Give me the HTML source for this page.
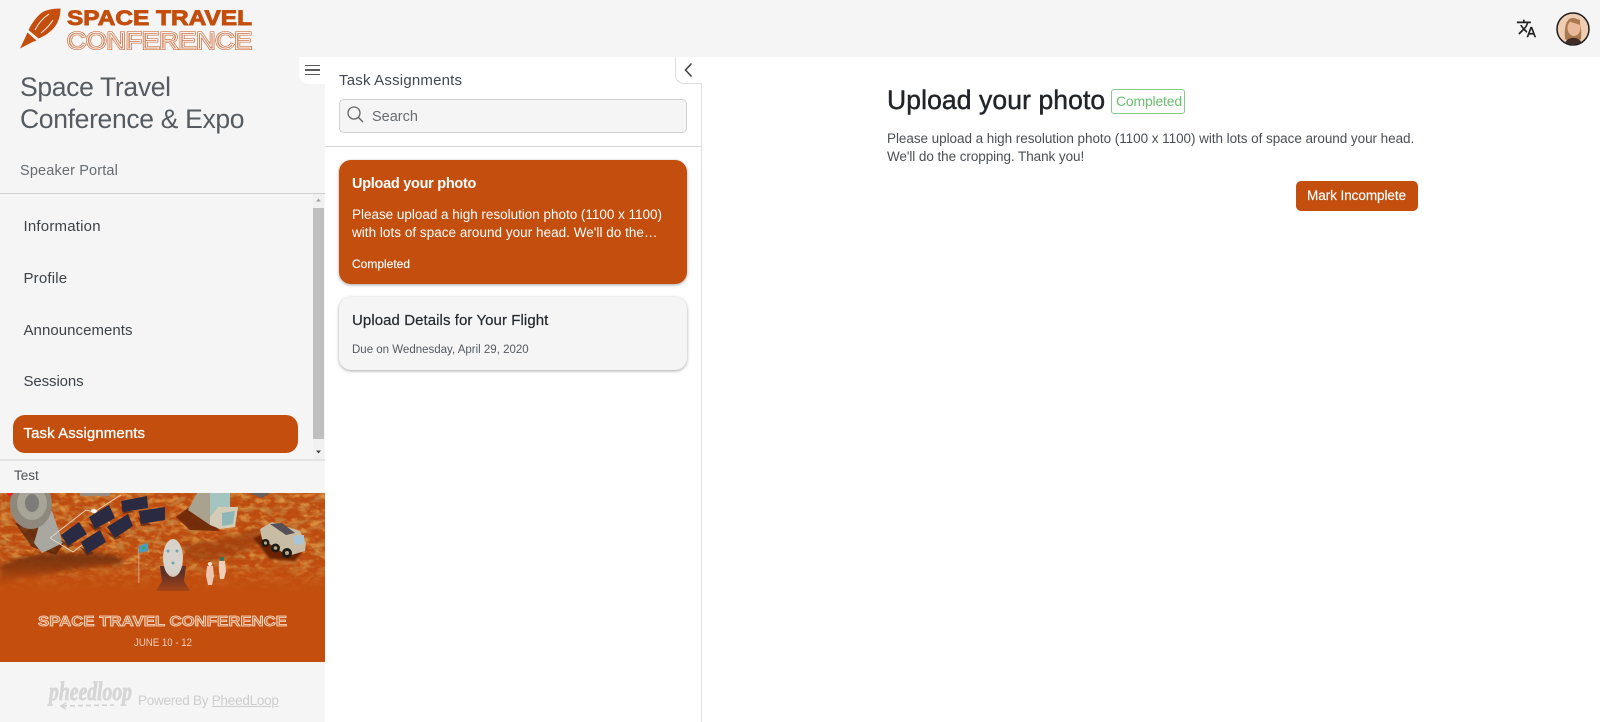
<!DOCTYPE html>
<html lang="en">
<head>
<meta charset="utf-8">
<title>Task Assignments</title>
<style>
html,body{margin:0;padding:0;width:1600px;height:722px;overflow:hidden;background:#fff;font-family:"Liberation Sans",Arial,sans-serif}
.t{position:absolute;white-space:nowrap;line-height:20px}
.b{position:absolute}
</style>
</head>
<body>
<!-- header -->
<div class="b" style="left:0;top:0;width:1600px;height:57px;background:#f5f5f5"></div>
<svg class="b" style="left:0;top:0" width="270" height="57" viewBox="0 0 270 57">
  <path d="M60.500 8.500C52 8.500 44 10 39.500 14.500C34.500 19.500 31 24.500 28.500 30L38.500 38.500C44 36.500 51 32 55 26.500C59 21 60.500 14.500 60.500 8.500Z" fill="#c34e0d"/>
  <path d="M35 30C38 24 43 18 49 14M41 33C46 29 50 25 53 20" fill="none" stroke="#f5f5f5" stroke-width="1"/>
  <path d="M27.500 32.500L36.500 40.500L32.500 42L20 48.500L25.500 37Z" fill="#c34e0d"/>
  <text x="67" y="25" font-family="Liberation Sans" font-weight="700" font-size="21.500" fill="#c34e0d" stroke="#c34e0d" stroke-width=".9" textLength="185" lengthAdjust="spacingAndGlyphs">SPACE TRAVEL</text>
  <text x="67" y="49" font-family="Liberation Sans" font-size="24" fill="#c34e0d" stroke="#c34e0d" stroke-width="2.100" textLength="185" lengthAdjust="spacingAndGlyphs">CONFERENCE</text>
  <text x="67" y="49" font-family="Liberation Sans" font-size="24" fill="#d9825a" stroke="#f5f5f5" stroke-width="1" textLength="185" lengthAdjust="spacingAndGlyphs">CONFERENCE</text>
</svg>
<svg class="b" style="left:1516px;top:18px" width="21" height="21" viewBox="0 0 24 24"><path fill="#222" d="M12.87 15.07l-2.54-2.51.03-.03c1.74-1.94 2.98-4.17 3.71-6.53H17V4h-7V2H8v2H1v1.99h11.17C11.5 7.92 10.44 9.75 9 11.35 8.07 10.32 7.3 9.19 6.69 8h-2c.73 1.63 1.73 3.17 2.98 4.56l-5.09 5.02L4 19l5-5 3.11 3.11.76-2.04zM18.5 10h-2L12 22h2l1.12-3h4.75L21 22h2l-4.5-12zm-2.62 7l1.62-4.33L19.12 17h-3.24z"/></svg>
<svg class="b" style="left:1556px;top:12px" width="34" height="34" viewBox="0 0 34 34">
  <circle cx="17" cy="17" r="16" fill="#efcdb2" stroke="#1e1e1e" stroke-width="1.500"/>
  <path d="M9 27C8 15 10 6 17 6S26 15 25 27C24 29 10 29 9 27Z" fill="#a8784e"/>
  <ellipse cx="18" cy="16" rx="6.500" ry="8" fill="#eab998"/>
  <path d="M12 8C15 11 20 11 24 13L24 8L17 6Z" fill="#a8784e"/>
  <path d="M9.500 30C12 24.500 23 24.500 25 30C21 33 13 33 9.500 30Z" fill="#3f2c24"/>
</svg>

<!-- sidebar -->
<div class="b" style="left:0;top:57px;width:325px;height:665px;background:#f5f5f5"></div>
<div class="b" style="left:299px;top:57px;width:26px;height:27px;background:#fff;border-bottom-left-radius:9px"></div>
<div class="b" style="left:305px;top:64.500px;width:15px;height:1.600px;background:#5c5c5c"></div>
<div class="b" style="left:305px;top:69px;width:15px;height:1.600px;background:#5c5c5c"></div>
<div class="b" style="left:305px;top:73.500px;width:15px;height:1.600px;background:#5c5c5c"></div>
<div class="t" style="left:20px;top:70.500px;font-size:26.500px;line-height:32px;color:#555b61;white-space:normal;width:270px;letter-spacing:-.33px">Space Travel<br>Conference &amp; Expo</div>
<div class="t" style="left:20px;top:161px;font-size:14.500px;color:#666c72;letter-spacing:.15px">Speaker Portal</div>
<div class="b" style="left:0;top:193px;width:325px;height:1px;background:#cfcfcf"></div>
<div class="t" style="left:23.500px;top:217px;font-size:15px;color:#3d4349;letter-spacing:.2px">Information</div>
<div class="t" style="left:23.500px;top:269px;font-size:15px;color:#3d4349;letter-spacing:.18px">Profile</div>
<div class="t" style="left:23.500px;top:321px;font-size:15px;color:#3d4349;letter-spacing:.05px">Announcements</div>
<div class="t" style="left:23.500px;top:372px;font-size:15px;color:#3d4349;letter-spacing:-.1px">Sessions</div>
<div class="b" style="left:13px;top:414.500px;width:285px;height:38.500px;background:#c34e0d;border-radius:12px"></div>
<div class="t" style="left:23.500px;top:424px;font-size:15px;color:#fff;letter-spacing:.1px;-webkit-text-stroke:.3px #fff">Task Assignments</div>
<!-- scrollbar -->
<div class="b" style="left:313px;top:194px;width:11px;height:265px;background:#f1f1f1"></div>
<div class="b" style="left:313px;top:208px;width:11px;height:231px;background:#bfbfbf"></div>
<svg class="b" style="left:313px;top:194px" width="11" height="265" viewBox="0 0 11 265"><path d="M3 7.500L5.500 4.500L8 7.500Z" fill="#a3a3a3"/><path d="M3 256.500L5.500 259.500L8 256.500Z" fill="#444"/></svg>
<div class="b" style="left:0;top:459px;width:325px;height:2px;background:#e4e4e4"></div>
<div class="t" style="left:14px;top:466px;font-size:13.500px;color:#4b5157">Test</div>

<!-- banner -->
<svg class="b" style="left:0;top:493px" width="325" height="169" viewBox="0 0 325 169">
  <defs>
    <linearGradient id="fade" x1="0" y1="0" x2="0" y2="1">
      <stop offset="0" stop-color="#c34e0d" stop-opacity="0"/>
      <stop offset=".5" stop-color="#c34e0d" stop-opacity="0"/>
      <stop offset="1" stop-color="#c34e0d"/>
    </linearGradient>
    <linearGradient id="rf" x1="0" y1="0" x2="0" y2="1">
      <stop offset="0" stop-color="#c34e0d" stop-opacity="0"/>
      <stop offset="1" stop-color="#c34e0d"/>
    </linearGradient>
    <filter id="mott" x="0" y="0" width="100%" height="100%">
      <feTurbulence type="fractalNoise" baseFrequency=".08 .15" numOctaves="3" seed="7"/>
      <feColorMatrix values="0 0 0 0 .55  0 0 0 0 .2  0 0 0 0 .04  4 0 0 0 -1.800"/>
    </filter>
    <filter id="mott2" x="0" y="0" width="100%" height="100%">
      <feTurbulence type="fractalNoise" baseFrequency=".1 .18" numOctaves="3" seed="21"/>
      <feColorMatrix values="0 0 0 0 .84  0 0 0 0 .4  0 0 0 0 .08  4 0 0 0 -2"/>
    </filter>
    <filter id="bl"><feGaussianBlur stdDeviation="2.500"/></filter>
    <filter id="bl1"><feGaussianBlur stdDeviation="1"/></filter>
  </defs>
  <rect width="325" height="169" fill="#c34e0d"/>
  <rect width="325" height="105" fill="#bd4c10"/>
  <rect width="325" height="105" filter="url(#mott)" opacity=".9"/>
  <rect width="325" height="105" filter="url(#mott2)" opacity=".6"/>
  <!-- terrain shadow -->
  <path d="M0 72C25 62 45 58 75 60C110 58 130 64 120 72C90 72 50 82 20 86L0 92Z" fill="#76300a" opacity=".9" filter="url(#bl)"/>
  <path d="M180 50C205 50 235 45 258 33L268 48L225 66L190 70Z" fill="#9c3d0c" opacity=".65" filter="url(#bl)"/>
  <rect y="45" width="325" height="60" fill="url(#fade)"/>
  <rect y="65" width="325" height="40" fill="url(#rf)"/>
  <!-- dish -->
  <path d="M15 30L38 30L64 50L56 62L32 54Z" fill="#4a1c08" opacity=".7"/>
  <path d="M42 22L52 18L63 50L42 60L34 50Z" fill="#a8a7a0"/>
  <ellipse cx="31" cy="11" rx="21" ry="25" fill="#8e897c"/>
  <ellipse cx="32" cy="10" rx="15" ry="17" fill="#a8a498"/>
  <ellipse cx="32" cy="10" rx="7" ry="9" fill="#7d7c78"/>
  <rect x="80" y="0" width="30" height="3" fill="#998e80"/>
  <circle cx="10" cy="0" r="3" fill="#e22"/>
  <!-- wires -->
  <path d="M50 45L86 17L94 19L121 2M50 45L73 59L82 52M94 19L110 30" fill="none" stroke="#e4d8c8" stroke-width=".9"/>
  <ellipse cx="94" cy="18" rx="3" ry="2" fill="#f5f5f0"/>
  <!-- panels -->
  <g fill="#5c2410" opacity=".7">
    <path d="M60 47L68 55L74 52Z"/><path d="M80 54L87 63L94 60Z"/><path d="M88 30L95 38L102 35Z"/><path d="M106 39L115 47L122 44Z"/><path d="M121 14L123 21L135 19Z"/><path d="M138 24L141 33L152 32Z"/>
  </g>
  <g fill="#2a2a42">
    <path d="M61 42L79 29L87 41L68 53Z"/>
    <path d="M81 49L100 37L106 49L87 61Z"/>
    <path d="M89 24L109 12L115 25L95 36Z"/>
    <path d="M107 34L128 21L133 33L115 45Z"/>
    <path d="M121 8L147 3L148 15L123 19Z"/>
    <path d="M139 18L165 14L165 27L141 31Z"/>
  </g>
  <!-- building -->
  <path d="M188 15L176 24L190 37L220 38L212 30Z" fill="#6a2708" opacity=".9"/>
  <path d="M188 17L197 0L210 0L210 32Z" fill="#a9a28e"/>
  <path d="M210 0L230 0L230 14L218 15L210 24Z" fill="#a4c4c0"/>
  <path d="M210 24L218 14L238 14L235 34L220 36L210 32Z" fill="#d4ccb6"/>
  <path d="M222 20L235 18L233 31L222 33Z" fill="#8fb6b6"/>
  <path d="M250 0L270 0L262 5Z" fill="#66605e"/>
  <!-- flag -->
  <rect x="138.500" y="56" width=".8" height="34" fill="#d9b7a0"/>
  <path d="M139 53L148 50L148 58L139 60Z" fill="#4a9bc4"/>
  <circle cx="143.500" cy="55" r="1.600" fill="#3aa85a"/>
  <!-- rocket -->
  <path d="M160 73L186 73L184 88L190 98L156 98L162 88Z" fill="#5d3028"/>
  <ellipse cx="173" cy="65" rx="10" ry="19" fill="#d8d3ca"/>
  <circle cx="168" cy="58" r="1.500" fill="#6fa3b8"/><circle cx="177" cy="58" r="1.500" fill="#6fa3b8"/><circle cx="173" cy="70" r="1.500" fill="#6fa3b8"/>
  <rect x="152" y="80" width="42" height="26" fill="url(#rf)"/>
  <!-- astronauts -->
  <path d="M207 73L213 73L214 83L212 92L208 92L206 83Z" fill="#eec6ae"/>
  <circle cx="210" cy="71" r="2" fill="#f3e2d2"/>
  <path d="M219 68L225 68L226 78L224 86L220 86L219 78Z" fill="#f0cfb7"/>
  <circle cx="222" cy="66" r="2" fill="#1e7a6e"/>
  <!-- rover -->
  <path d="M253 45L268 40L303 58L295 68L270 66Z" fill="#6a2406" filter="url(#bl1)"/>
  <path d="M260 36L272 29L300 38L306 50L305 58L288 63L262 46Z" fill="#c8bca5"/>
  <path d="M270 31L282 30L295 40L286 42Z" fill="#555058"/>
  <path d="M293 43L304 42L304 50L295 52Z" fill="#a8c6d8"/>
  <circle cx="265.500" cy="50" r="4" fill="#1d1a17"/><circle cx="275.500" cy="55" r="4.500" fill="#1d1a17"/><circle cx="287" cy="60" r="5" fill="#1d1a17"/>
  <circle cx="265.500" cy="50" r="1.600" fill="#b8a888"/><circle cx="275.500" cy="55" r="1.800" fill="#b8a888"/><circle cx="287" cy="60" r="2" fill="#b8a888"/>
  <!-- title -->
  <text x="38" y="133" font-family="Liberation Sans" font-weight="700" font-size="14.500" fill="#d86c2c" stroke="#f7e0d2" stroke-width=".8" textLength="249" lengthAdjust="spacingAndGlyphs">SPACE TRAVEL CONFERENCE</text>
  <text x="134" y="153" font-family="Liberation Sans" font-size="11" fill="#f0cdb8" textLength="58" lengthAdjust="spacingAndGlyphs">JUNE 10 - 12</text>
</svg>

<!-- footer -->
<svg class="b" style="left:46px;top:678px" width="90" height="36" viewBox="0 0 90 36">
  <text x="3" y="22" font-family="Liberation Serif" font-style="italic" font-weight="700" font-size="26" fill="#d6d6d6" stroke="#d6d6d6" stroke-width=".8" textLength="83" lengthAdjust="spacingAndGlyphs">pheedloop</text>
  <path d="M16 28L68 27" stroke="#d2d2d2" stroke-width="1.600" stroke-dasharray="5 3" fill="none"/>
  <path d="M20 25L15 28L20 31" stroke="#d2d2d2" stroke-width="1.500" fill="none"/>
</svg>
<div class="t" style="left:138px;top:691px;font-size:13.500px;color:#cdcdcd;letter-spacing:-.25px">Powered By <span style="text-decoration:underline">PheedLoop</span></div>

<!-- middle panel -->
<div class="b" style="left:701px;top:57px;width:1px;height:665px;background:#dedede"></div>
<div class="b" style="left:675px;top:57px;width:26px;height:26px;background:#fff;border-left:1px solid #dedede;border-bottom:1px solid #dedede;border-bottom-left-radius:9px"></div>
<svg class="b" style="left:682px;top:61px" width="14" height="18" viewBox="0 0 14 18"><path d="M9.500 2.500L3.500 9L9.500 15.500" fill="none" stroke="#444" stroke-width="1.600"/></svg>
<div class="t" style="left:339px;top:71px;font-size:15px;color:#42484e;letter-spacing:.2px">Task Assignments</div>
<div class="b" style="left:339px;top:99px;width:346px;height:32px;background:#f5f5f5;border:1px solid #cfcfcf;border-radius:5px"></div>
<svg class="b" style="left:346px;top:105px" width="19" height="19" viewBox="0 0 19 19"><circle cx="8" cy="8" r="6" fill="none" stroke="#666" stroke-width="1.300"/><path d="M12.500 12.500L17 17" stroke="#666" stroke-width="1.400"/></svg>
<div class="t" style="left:372px;top:106.500px;font-size:14.500px;color:#666c72">Search</div>
<div class="b" style="left:325px;top:146px;width:376px;height:1px;background:#d8d8d8"></div>

<div class="b" style="left:339px;top:160px;width:348px;height:124px;background:#c34e0d;border-radius:12px;box-shadow:0 1px 3px rgba(0,0,0,.35)"></div>
<div class="t" style="left:352px;top:173.500px;font-size:14.500px;font-weight:700;color:#fff;letter-spacing:-.28px">Upload your photo</div>
<div class="t" style="left:352px;top:205px;font-size:13.500px;color:#fff;letter-spacing:-.02px">Please upload a high resolution photo (1100 x 1100)</div>
<div class="t" style="left:352px;top:223px;font-size:13.500px;color:#fff;letter-spacing:.03px">with lots of space around your head. We'll do the…</div>
<div class="t" style="left:352px;top:253.500px;font-size:12px;color:#fff;-webkit-text-stroke:.15px #fff">Completed</div>

<div class="b" style="left:339px;top:297px;width:348px;height:73px;background:#f5f5f5;border-radius:12px;box-shadow:0 1px 3px rgba(0,0,0,.35)"></div>
<div class="t" style="left:352px;top:310.500px;font-size:15px;color:#25292e;letter-spacing:.07px;-webkit-text-stroke:.2px #25292e">Upload Details for Your Flight</div>
<div class="t" style="left:352px;top:340px;font-size:11.500px;color:#555b61">Due on Wednesday, April 29, 2020</div>

<!-- right content -->
<div class="t" style="left:887px;top:86px;font-size:26.500px;line-height:28px;color:#212529;letter-spacing:.1px;-webkit-text-stroke:.45px #212529">Upload your photo</div>
<div class="b" style="left:1111px;top:88.500px;width:72px;height:23px;border:1px solid #86cc88;border-radius:3px"></div>
<div class="t" style="left:1116px;top:90.500px;font-size:14px;color:#6bbf6e;letter-spacing:-.2px">Completed</div>
<div class="t" style="left:887px;top:128.500px;font-size:13.500px;color:#4a4f55;letter-spacing:-.05px">Please upload a high resolution photo (1100 x 1100) with lots of space around your head.</div>
<div class="t" style="left:887px;top:147px;font-size:13.500px;color:#4a4f55;letter-spacing:-.07px">We'll do the cropping. Thank you!</div>
<div class="b" style="left:1296px;top:181px;width:122px;height:30px;background:#c34e0d;border-radius:5px"></div>
<div class="t" style="left:1307px;top:186px;font-size:13.500px;color:#fff;letter-spacing:-.05px;-webkit-text-stroke:.15px #fff">Mark Incomplete</div>
</body>
</html>
